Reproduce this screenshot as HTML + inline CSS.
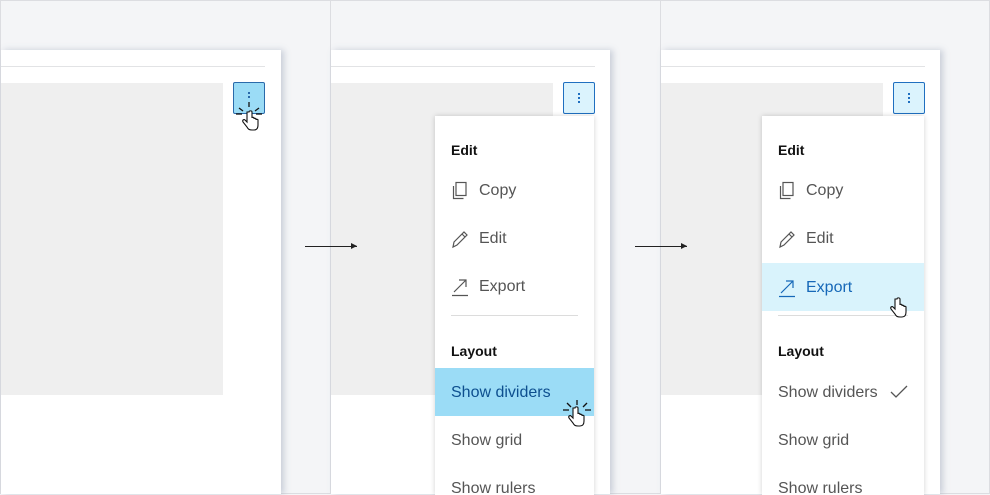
<!DOCTYPE html>
<html><head><meta charset="utf-8"><style>
*{margin:0;padding:0;box-sizing:border-box}
html,body{width:990px;height:495px;overflow:hidden}
body{background:#f4f5f7;font-family:"Liberation Sans",Arial,sans-serif;position:relative}
.abs{position:absolute}
.frame{position:absolute;left:0;top:0;width:990px;height:494px;border:1px solid #dcdde1}
.vline{position:absolute;top:0;width:1px;height:494px;background:#dcdde1}
.card{position:absolute;top:50px;height:444px;background:#fff;box-shadow:3px 0 6px rgba(120,135,160,.35)}
.hl{position:absolute;top:66px;height:1px;background:#e2e3e5}
.grey{position:absolute;top:83px;height:312px;background:#efefef}
.btn{position:absolute;top:82px;width:32px;height:32px;border:1.5px solid #1f6fc0;border-radius:2px;background:#dbf3fd}
.dots{position:absolute;left:14px;top:10px;width:2px;height:10px;background:repeating-linear-gradient(#1f6fc0 0 2px,transparent 2px 4px)}
.menu{position:absolute;top:116px;height:379px;background:#fff;box-shadow:0 0 5px rgba(0,0,0,.18)}
.h{position:absolute;left:16px;font-size:14px;font-weight:bold;color:#111}
.it{position:absolute;left:0;right:0;height:48px;font-size:16px;color:#555;line-height:50px}
.it span{position:absolute;left:44px}
.it.np span{left:16px}
.it svg{position:absolute;left:16px;top:15px}
.div{position:absolute;left:16px;right:16px;height:1px;background:#dcdcdc}
.arrow{position:absolute;top:246px;width:52px;height:1px;background:#222}
.arrow:after{content:"";position:absolute;right:0;top:-3px;border-left:6px solid #222;border-top:3.5px solid transparent;border-bottom:3.5px solid transparent}
</style></head><body>
<div class="frame"></div>
<div class="vline" style="left:330px"></div>
<div class="vline" style="left:660px"></div>

<!-- panel 1 -->
<div class="card" style="left:1px;width:280px"></div>
<div class="hl" style="left:1px;width:264px"></div>
<div class="grey" style="left:1px;width:222px"></div>
<div class="btn" style="left:233px;background:#9bdcf6;border-color:#2a6aaa"><div class="dots" style="height:6px;top:9px;background:repeating-linear-gradient(#2a6aaa 0 2px,transparent 2px 4px)"></div></div>
<svg class="abs" style="left:234px;top:100px" width="30" height="32" viewBox="0 0 30 32"><g stroke="#111" stroke-width="1.3"><line x1="15" y1="2" x2="15" y2="7"/><line x1="5" y1="8" x2="9" y2="11"/><line x1="25" y1="8" x2="21" y2="11"/><line x1="2" y1="14" x2="8" y2="14"/><line x1="22" y1="14" x2="28" y2="14"/></g><path d="M13 12v10l-2-2c-1-1-3 0-2 2l4 5c1 2 2 3 5 3h2c3 0 4-2 4-5v-5c0-1-2-1-2 0v-1c0-1-2-1-2 0v-1c0-1-2-1-2 0v-6c0-1.5-3-1.5-3 0z" fill="#fff" stroke="#111" stroke-width="1.1"/></svg>

<!-- panel 2 -->
<div class="card" style="left:331px;width:279px"></div>
<div class="hl" style="left:331px;width:264px"></div>
<div class="grey" style="left:331px;width:222px"></div>
<div class="btn" style="left:563px"><div class="dots"></div></div>
<div class="menu" style="left:435px;width:159px">
 <div class="h" style="top:26px">Edit</div>
 <div class="it" style="top:50px"><svg width="18" height="20" viewBox="0 0 18 20" fill="none" stroke="#555" stroke-width="1.2"><rect x="5" y="1.5" width="10" height="13"/><path d="M2.5 5v12.5h10"/></svg><span>Copy</span></div>
 <div class="it" style="top:98px"><svg width="18" height="20" viewBox="0 0 18 20" fill="none" stroke="#555" stroke-width="1.2"><path d="M2 18l1-5L13 3l3 3-10 10z M11 5l3 3"/></svg><span>Edit</span></div>
 <div class="it" style="top:146px"><svg width="18" height="20" viewBox="0 0 18 20" fill="none" stroke="#555" stroke-width="1.2"><path d="M1 18.5h16M3 15L15 3M8 3h7v7"/></svg><span>Export</span></div>
 <div class="div" style="top:199px"></div>
 <div class="h" style="top:227px">Layout</div>
 <div class="it np" style="top:252px;background:#9bdcf6;color:#0d4f8f"><span>Show dividers</span></div>
 <div class="it np" style="top:300px"><span>Show grid</span></div>
 <div class="it np" style="top:348px"><span>Show rulers</span></div>
</div>
<svg class="abs" style="left:562px;top:398px" width="30" height="32" viewBox="0 0 30 32"><g stroke="#111" stroke-width="1.3"><line x1="15" y1="2" x2="15" y2="7"/><line x1="5" y1="5" x2="9" y2="9"/><line x1="25" y1="5" x2="21" y2="9"/><line x1="1" y1="12" x2="7" y2="12"/><line x1="23" y1="12" x2="29" y2="12"/></g><path d="M11 10v10l-2-2c-1-1-3 0-2 2l4 5c1 2 2 3 5 3h2c3 0 4-2 4-5v-5c0-1-2-1-2 0v-1c0-1-2-1-2 0v-1c0-1-2-1-2 0v-6c0-1.5-3-1.5-3 0z" fill="#fff" stroke="#111" stroke-width="1.1"/></svg>

<!-- panel 3 -->
<div class="card" style="left:661px;width:279px"></div>
<div class="hl" style="left:661px;width:264px"></div>
<div class="grey" style="left:661px;width:222px"></div>
<div class="btn" style="left:893px"><div class="dots"></div></div>
<div class="menu" style="left:762px;width:162px">
 <div class="h" style="top:26px">Edit</div>
 <div class="it" style="top:50px"><svg width="18" height="20" viewBox="0 0 18 20" fill="none" stroke="#555" stroke-width="1.2"><rect x="5" y="1.5" width="10" height="13"/><path d="M2.5 5v12.5h10"/></svg><span>Copy</span></div>
 <div class="it" style="top:98px"><svg width="18" height="20" viewBox="0 0 18 20" fill="none" stroke="#555" stroke-width="1.2"><path d="M2 18l1-5L13 3l3 3-10 10z M11 5l3 3"/></svg><span>Edit</span></div>
 <div class="it" style="top:147px;background:#d9f3fc;color:#1668b8"><svg width="18" height="20" viewBox="0 0 18 20" fill="none" stroke="#1668b8" stroke-width="1.2"><path d="M1 18.5h16M3 15L15 3M8 3h7v7"/></svg><span>Export</span></div>
 <div class="div" style="top:199px"></div>
 <div class="h" style="top:227px">Layout</div>
 <div class="it np" style="top:252px"><span>Show dividers</span><svg style="left:128px;top:17px" width="18" height="14" viewBox="0 0 18 14" fill="none" stroke="#555" stroke-width="1.3"><path d="M1 7l5 5L17 1"/></svg></div>
 <div class="it np" style="top:300px"><span>Show grid</span></div>
 <div class="it np" style="top:348px"><span>Show rulers</span></div>
</div>
<svg class="abs" style="left:889px;top:297px" width="22" height="26" viewBox="0 0 22 26"><path d="M6 2v10l-2-2c-1-1-3 0-2 2l4 5c1 2 2 3 5 3h2c3 0 4-2 4-5v-5c0-1-2-1-2 0v-1c0-1-2-1-2 0v-1c0-1-2-1-2 0v-6c0-1.5-3-1.5-3 0z" fill="#fff" stroke="#111" stroke-width="1.1"/></svg>

<div class="arrow" style="left:305px"></div>
<div class="arrow" style="left:635px"></div>
</body></html>
